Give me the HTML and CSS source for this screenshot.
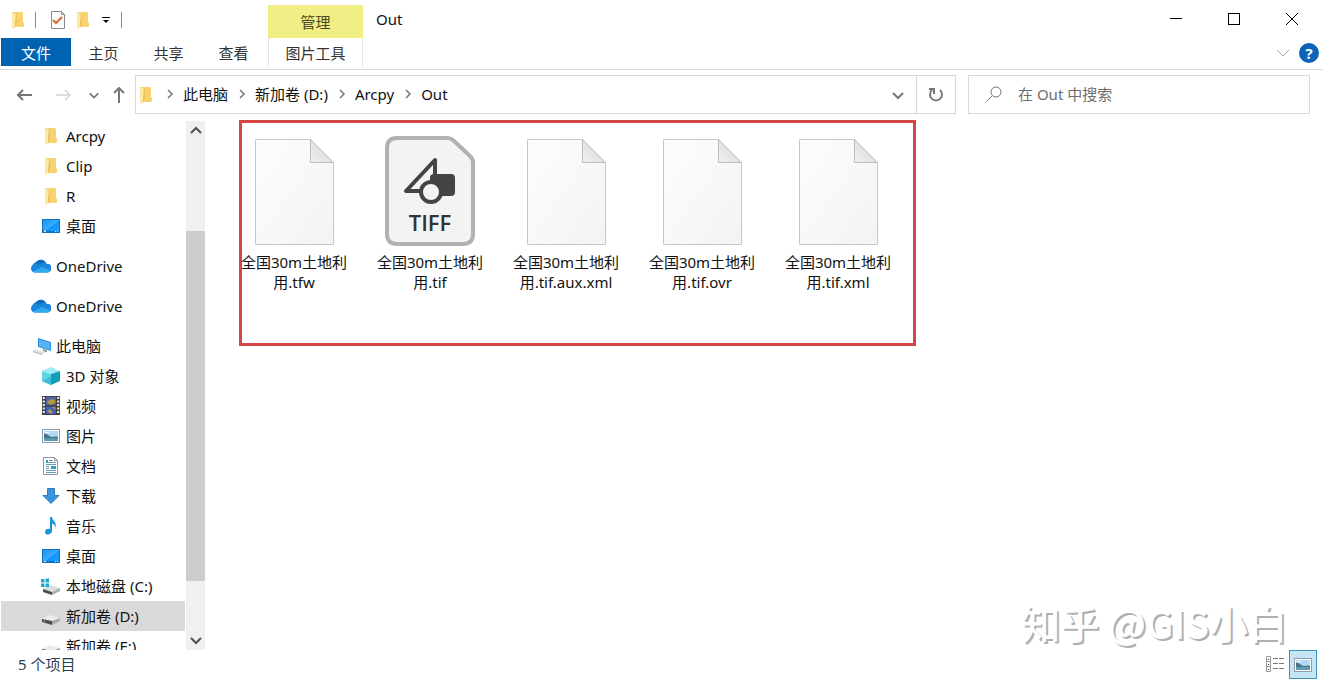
FILE: index.html
```html
<!DOCTYPE html>
<html lang="zh-CN">
<head>
<meta charset="UTF-8">
<title>Out</title>
<link rel="stylesheet" href="styles.css">
</head>
<body>

<!-- Shared icons -->
<svg class="sprite" aria-hidden="true">
	<defs>
		<linearGradient id="page-fill" x1="0" y1="0" x2="1" y2="1">
			<stop offset="0" stop-color="#fdfdfe"/>
			<stop offset="1" stop-color="#f1f3f5"/>
		</linearGradient>
		<linearGradient id="fold-fill" x1="0" y1="1" x2="1" y2="0">
			<stop offset="0" stop-color="#f4f1f2"/>
			<stop offset="0.6" stop-color="#dddbdc"/>
		</linearGradient>
		<linearGradient id="screen-fill" x1="0" y1="0" x2="1" y2="1">
			<stop offset="0" stop-color="#1492f5"/>
			<stop offset="0.5" stop-color="#3aaaff"/>
			<stop offset="0.55" stop-color="#0f95fb"/>
			<stop offset="1" stop-color="#1ba2ff"/>
		</linearGradient>
	</defs>
	<symbol id="i-folder" viewBox="0 0 20 20">
		<path d="M4 2h10l1 1v9l1 1v3l-1 1H5l-1-1z" fill="#f6d271"/>
		<path d="M4 2l4 2v9l-2 6-2-1z" fill="#ffe8a2"/>
		<path d="M8 4l1-1v9l-2 6v-5z" fill="#eac15c"/>
	</symbol>
	<symbol id="i-desktop" viewBox="0 0 20 20">
		<rect x="1.500" y="3.500" width="17" height="13" fill="url(#screen-fill)" stroke="#1070ba"/>
		<path d="M2 15.500h16" stroke="#0e76c8"/>
		<path d="M3 15.500h2m9 0h1m1 0h1" stroke="#d7efff"/>
	</symbol>
	<symbol id="i-cloud" viewBox="0 0 20 20">
		<path d="M4 15a5 5 0 0 1 1-9 6 6 0 0 1 10.500 2A4 4 0 0 1 17 16H4z" fill="#0f6cc4"/>
		<path d="M10 8a4 4 0 0 1 6 0 4 4 0 0 1 1 8H4z" fill="#1788dc"/>
		<path d="M0 13a5 5 0 0 1 7-5l12 6c-.5 2-1.500 2.500-3 2.500H4c-2 0-3.500-1-4-3.500z" fill="#1a86da"/>
		<path d="M11 11l8 3c-.5 2-1.500 2.500-3 2.500H4c-1 0-1.500-.5-2-1z" fill="#34a8ee"/>
	</symbol>
	<symbol id="i-pc" viewBox="0 0 20 20">
		<path d="M7 2l13 4v9L7 11z" fill="#2f91dc"/>
		<path d="M8 3.500l11 3.300v7L8 10.500z" fill="#54b3f4"/>
		<path d="M12 13l4 1.200v2l-4-1z" fill="#8c9298"/>
		<path d="M4 13l10 3-3 2-9-3z" fill="#e4e6e8"/>
		<path d="M2 15l9 3v.8L2 16zM11 18l3-2" fill="#b4b8bb" stroke="#b4b8bb" stroke-width=".4"/>
	</symbol>
	<symbol id="i-cube" viewBox="0 0 20 20">
		<path d="M10 1l9 4-9 3-9-3z" fill="#9cecf3"/>
		<path d="M1 5l9 3v11l-9-4z" fill="#5fd6e6"/>
		<path d="M19 5l-9 3v11l9-4z" fill="#149cb8"/>
		<path d="M1 15l9-5v9z" fill="#40bfd4"/>
	</symbol>
	<symbol id="i-video" viewBox="0 0 20 20">
		<path d="M1 0h18v19H1z" fill="#454040"/>
		<path d="M5 1h10v8H5z" fill="#4b67b1"/>
		<path d="M5 10.500h10V18H5z" fill="#3d62bd"/>
		<path d="M6 6l4-3 4 1v3l-5 2z" fill="#b79a3b"/>
		<path d="M6 15l3-2 3 3-2 2zM11 11h3v3z" fill="#b49a48"/>
		<path d="M2.800 1v17M17.200 1v17" stroke="#efefef" stroke-width="2" stroke-dasharray="2 1.500"/>
	</symbol>
	<symbol id="i-picture" viewBox="0 0 20 20">
		<rect x="1.500" y="3.500" width="17" height="13" fill="#fff" stroke="#8e9ba7"/>
		<path d="M3 5h14v10H3z" fill="#b0d8f7"/>
		<path d="M3 8c3-1 5 3 8 3 2 0 3-1 6 0v2H3z" fill="#4a7282"/>
		<path d="M3 12h14v3H3z" fill="#5b9ab4"/>
		<path d="M4 6.500h4" stroke="#fff"/>
	</symbol>
	<symbol id="i-document" viewBox="0 0 20 20">
		<path d="M2.500 1.500h11l3 3v14h-14z" fill="#fff" stroke="#8d979e"/>
		<path d="M13.500 1.500v3h3" fill="none" stroke="#8d979e"/>
		<path d="M8 4.500h4M7 6.500h8M5 8.500h10M5 10.500h3M5 12.500h3M5 14.500h10M5 16.500h10" stroke="#699cb4"/>
		<path d="M10 10h5v3h-5zM5 4h2v3H5z" fill="#2fa1ba"/>
	</symbol>
	<symbol id="i-download" viewBox="0 0 20 20">
		<path d="M6.500 2.500h7v7h4.500l-8 8-8-8h4.500z" fill="#3c92dc" stroke="#2a7bc4"/>
	</symbol>
	<symbol id="i-music" viewBox="0 0 20 20">
		<path d="M9 1h2c0 4 6 5 3 11 0-3-1-4-3-4.500V15c0 4-7 5-7 1 0-3 3-4 5-3z" fill="#1f92dc"/>
	</symbol>
	<symbol id="i-drive" viewBox="0 0 20 20">
		<path d="M1 13l8-4 10 3-8 3z" fill="#ececec"/>
		<path d="M1 13l10 2v4L1 16z" fill="#4b4e50"/>
		<path d="M11 15l8-3v3l-8 4z" fill="#a8abad"/>
		<path d="M3 15l1 .3" stroke="#e8f5e9"/>
	</symbol>
	<symbol id="i-system" viewBox="0 0 20 20">
		<path d="M2 13l7-4 10 3-8 4z" fill="#dedede"/>
		<path d="M2 13l9 3v3l-9-3z" fill="#4b4e50"/>
		<path d="M11 16l8-4v3l-8 4z" fill="#a8abad"/>
		<path d="M0 3h3.500v3.500H0zM4.500 2.500H8v4H4.500zM0 7.500h3.500V11H0zM4.500 7.500H8V11H4.500z" fill="#20a9c8"/>
	</symbol>
	<symbol id="i-chevron" viewBox="0 0 10 10">
		<path d="M3 1l4 4-4 4" fill="none" stroke="#757575" stroke-width="1.500"/>
	</symbol>
	<symbol id="i-down" viewBox="0 0 14 14">
		<path d="M2 5l5 5 5-5" fill="none" stroke="currentColor" stroke-width="2"/>
	</symbol>
	<symbol id="i-page" viewBox="0 0 80 108">
		<path d="M1.500 1.500h55l23 23v82h-78z" fill="url(#page-fill)" stroke="#c6c8ca"/>
		<path d="M56.500 1.500v23h23z" fill="url(#fold-fill)" stroke="#bdbdbd"/>
	</symbol>
</svg>

<div class="window">
	<header class="titlebar">
		<div class="quick">
			<svg class="icon"><use href="#i-folder"/></svg>
			<span class="divider"></span>
			<button class="tool" aria-label="属性">
				<svg class="icon" viewBox="0 0 20 20">
					<path d="M3.500 1.500h10l3 3v14h-13z" fill="#fbfbfb" stroke="#8a8a8a"/>
					<path d="M13.500 1.500v3h3" fill="none" stroke="#8a8a8a"/>
					<path d="M5 10l3 3 6-6" fill="none" stroke="#dd6836" stroke-width="2"/>
				</svg>
			</button>
			<button class="tool" aria-label="新建文件夹"><svg class="icon"><use href="#i-folder"/></svg></button>
			<button class="tool tool-menu" aria-label="自定义快速访问工具栏">
				<svg class="icon-small" viewBox="0 0 10 10"><path d="M1 2.500h8" stroke="#000"/><path d="M2 5h6L5 8z" fill="#000"/></svg>
			</button>
			<span class="divider"></span>
		</div>
		<div class="context-title">管理</div>
		<div class="title">Out</div>
		<div class="controls">
			<button aria-label="最小化"><svg viewBox="0 0 14 14"><path d="M1 6.500h12" stroke="#000"/></svg></button>
			<button aria-label="最大化"><svg viewBox="0 0 14 14"><rect x="1.500" y="1.500" width="11" height="11" fill="none" stroke="#000"/></svg></button>
			<button aria-label="关闭"><svg viewBox="0 0 14 14"><path d="M1 1l12 12M13 1L1 13" stroke="#000"/></svg></button>
		</div>
	</header>

	<nav class="tabs">
		<button class="tab tab-file">文件</button>
		<button class="tab">主页</button>
		<button class="tab">共享</button>
		<button class="tab">查看</button>
		<button class="tab tab-context">图片工具</button>
		<div class="help">
			<button class="expand" aria-label="展开功能区"><svg viewBox="0 0 14 14"><path d="M1 4l6 6 6-6" fill="none" stroke="#a5a5a5"/></svg></button>
			<button class="help-button" aria-label="帮助">?</button>
		</div>
	</nav>

	<div class="navbar">
		<div class="history">
			<button class="nav-back" aria-label="后退"><svg viewBox="0 0 16 16"><path d="M15 8H1M6 3L1 8l5 5" fill="none" stroke="#777" stroke-width="2"/></svg></button>
			<button class="nav-forward" aria-label="前进"><svg viewBox="0 0 16 16"><path d="M1 8h14M10 3l5 5-5 5" fill="none" stroke="#d4d4d4" stroke-width="1.500"/></svg></button>
			<button class="nav-recent" aria-label="最近浏览的位置"><svg viewBox="0 0 14 14"><use href="#i-down"/></svg></button>
			<button class="nav-up" aria-label="向上"><svg viewBox="0 0 16 16"><path d="M8 16V1M3 6l5-5 5 5" fill="none" stroke="#777" stroke-width="2"/></svg></button>
		</div>
		<div class="address">
			<svg class="icon"><use href="#i-folder"/></svg>
			<ol class="crumbs">
				<li><svg><use href="#i-chevron"/></svg><a href="#pc">此电脑</a></li>
				<li><svg><use href="#i-chevron"/></svg><a href="#d">新加卷 (D:)</a></li>
				<li><svg><use href="#i-chevron"/></svg><a href="#arcpy">Arcpy</a></li>
				<li><svg><use href="#i-chevron"/></svg><a href="#out">Out</a></li>
			</ol>
			<button class="address-list" aria-label="以前的位置"><svg viewBox="0 0 14 14"><use href="#i-down"/></svg></button>
			<button class="refresh" aria-label="刷新"><svg viewBox="0 0 16 16"><path d="M12 3a6 6 0 1 1-8 0" fill="none" stroke="#777" stroke-width="2"/><path d="M1 2h5v5" fill="none" stroke="#777" stroke-width="2"/></svg></button>
		</div>
		<label class="search">
			<svg viewBox="0 0 16 16"><circle cx="10" cy="6" r="5" fill="none" stroke="#777"/><path d="M6.500 9.500L.5 15.500" stroke="#777"/></svg>
			<input type="text" placeholder="在 Out 中搜索" aria-label="在 Out 中搜索">
		</label>
	</div>

	<div class="main">
		<nav class="tree">
			<ul>
				<li><a href="#arcpy"><svg class="icon"><use href="#i-folder"/></svg>Arcpy</a></li>
				<li><a href="#clip"><svg class="icon"><use href="#i-folder"/></svg>Clip</a></li>
				<li><a href="#r"><svg class="icon"><use href="#i-folder"/></svg>R</a></li>
				<li><a href="#desktop"><svg class="icon"><use href="#i-desktop"/></svg>桌面</a></li>
			</ul>
			<ul class="top-level">
				<li><a href="#onedrive"><svg class="icon"><use href="#i-cloud"/></svg>OneDrive</a></li>
			</ul>
			<ul class="top-level">
				<li><a href="#onedrive-2"><svg class="icon"><use href="#i-cloud"/></svg>OneDrive</a></li>
			</ul>
			<ul class="top-level">
				<li><a href="#pc"><svg class="icon"><use href="#i-pc"/></svg>此电脑</a></li>
			</ul>
			<ul>
				<li><a href="#3d"><svg class="icon"><use href="#i-cube"/></svg>3D 对象</a></li>
				<li><a href="#video"><svg class="icon"><use href="#i-video"/></svg>视频</a></li>
				<li><a href="#pictures"><svg class="icon"><use href="#i-picture"/></svg>图片</a></li>
				<li><a href="#documents"><svg class="icon"><use href="#i-document"/></svg>文档</a></li>
				<li><a href="#downloads"><svg class="icon"><use href="#i-download"/></svg>下载</a></li>
				<li><a href="#music"><svg class="icon"><use href="#i-music"/></svg>音乐</a></li>
				<li><a href="#desktop"><svg class="icon"><use href="#i-desktop"/></svg>桌面</a></li>
				<li><a href="#c"><svg class="icon"><use href="#i-system"/></svg>本地磁盘 (C:)</a></li>
				<li><a class="selected" href="#d"><svg class="icon"><use href="#i-drive"/></svg>新加卷 (D:)</a></li>
				<li><a href="#e"><svg class="icon"><use href="#i-drive"/></svg>新加卷 (E:)</a></li>
			</ul>
		</nav>
		<div class="scrollbar">
			<button class="scroll-up" aria-label="向上滚动"><svg viewBox="0 0 14 14"><use href="#i-down"/></svg></button>
			<div class="scroll-before"></div>
			<div class="scroll-thumb"></div>
			<div class="scroll-after"></div>
			<button aria-label="向下滚动"><svg viewBox="0 0 14 14"><use href="#i-down"/></svg></button>
		</div>

		<main class="files">
			<a class="file" href="#tfw"><svg class="page"><use href="#i-page"/></svg><span>全国30m土地利用.tfw</span></a>
			<a class="file" href="#tif">
				<svg class="tiff" viewBox="0 0 90 112">
					<path d="M12 3h51q3 0 6 3l15 14q4 4 4 7v72q0 10-10 10H12q-10 0-10-10V13Q2 3 12 3z" fill="#f3f3f3" stroke="#b1b1b1" stroke-width="4"/>
					<path d="M50 25v31H21z" fill="none" stroke="#444" stroke-width="4" stroke-linejoin="round"/>
					<rect x="45" y="39" width="25" height="22" rx="4" fill="#444"/>
					<circle cx="46" cy="57" r="10" fill="#f3f3f3" stroke="#444" stroke-width="4"/>
					<text x="45" y="96" text-anchor="middle">TIFF</text>
				</svg>
				<span>全国30m土地利用.tif</span>
			</a>
			<a class="file" href="#aux"><svg class="page"><use href="#i-page"/></svg><span>全国30m土地利用.tif.aux.xml</span></a>
			<a class="file" href="#ovr"><svg class="page"><use href="#i-page"/></svg><span>全国30m土地利用.tif.ovr</span></a>
			<a class="file" href="#xml"><svg class="page"><use href="#i-page"/></svg><span>全国30m土地利用.tif.xml</span></a>
			<div class="marker"></div>
			<div class="watermark">知乎 @GIS小白</div>
		</main>
	</div>

	<footer class="status">
		<span class="count">5 个项目</span>
		<button class="view" aria-label="详细信息">
			<svg class="icon" viewBox="0 0 20 20">
				<path d="M1.500 1.500h4v15h-4zM1.500 6.500h4M1.500 11.500h4" fill="none" stroke="#999"/>
				<path d="M3 4.500h1M3 9.500h1M3 14.500h1" stroke="#333"/>
				<path d="M8 3.500h5m1 0h5M8 8.500h5m1 0h5M8 13.500h5m1 0h5" stroke="#777"/>
			</svg>
		</button>
		<button class="view active" aria-label="大图标"><svg class="icon"><use href="#i-picture"/></svg></button>
	</footer>
</div>

</body>
</html>
```
FILE: styles.css
```css
* {
	box-sizing: border-box;
}
body {
	margin: 0;
	font: 15px/20px "Noto Sans", "Noto Sans CJK SC", sans-serif;
	color: #111;
	background: #fff;
}
button {
	display: flex;
	align-items: center;
	justify-content: center;
	margin: 0;
	padding: 0;
	border: 0;
	background: none;
	font: inherit;
	color: inherit;
}
a {
	color: inherit;
	text-decoration: none;
}
ul, ol {
	margin: 0;
	padding: 0;
	list-style: none;
}
svg {
	display: block;
	flex: none;
}
.sprite {
	position: absolute;
	width: 0;
	height: 0;
}
.icon {
	width: 20px;
	height: 20px;
}
.icon-small {
	width: 10px;
	height: 10px;
}

.window {
	display: flex;
	flex-direction: column;
	height: 100vh;
	overflow: hidden;
}

/* Title bar */
.titlebar {
	display: flex;
	flex: none;
	height: 38px;
}
.quick {
	display: flex;
	align-items: center;
	width: 268px;
	padding-left: 8px;
	padding-top: 2px;
}
.divider {
	width: 1px;
	height: 16px;
	margin: 0 7px;
	background: #8a8a8a;
}
.tool {
	width: 20px;
	height: 24px;
	margin-left: 5px;
}
.tool-menu {
	width: 16px;
}
.context-title {
	width: 95px;
	margin-top: 5px;
	line-height: 34px;
	height: 33px;
	text-align: center;
	color: #4a4a20;
	background: #f0ee84;
}
.title {
	flex: 1;
	padding-left: 13px;
	line-height: 38px;
}
.controls {
	display: flex;
	padding-right: 2px;
}
.controls button {
	width: 58px;
}
.controls svg {
	width: 14px;
	height: 14px;
}

/* Ribbon tabs */
.tabs {
	display: flex;
	flex: none;
	height: 32px;
	padding-left: 1px;
	border-bottom: 1px solid #dadbdc;
}
.tab {
	width: 65px;
	height: 28px;
	padding-top: 1px;
	color: #333;
}
.tab-file {
	width: 70px;
	color: #fff;
	background: #0063b1;
}
.tab-context {
	width: 95px;
	margin-left: 2px;
	border: solid #e2e2e2;
	border-width: 0 1px;
}
.help {
	display: flex;
	align-items: center;
	gap: 9px;
	margin-left: auto;
	padding: 0 4px 1px 0;
}
.expand svg {
	width: 14px;
	height: 14px;
}
.help-button {
	width: 20px;
	height: 20px;
	border-radius: 50%;
	color: #fff;
	font-weight: bold;
	background: #0c64b8;
}

/* Address row */
.navbar {
	display: flex;
	flex: none;
	height: 50px;
	padding: 5px 13px 6px 0;
}
.history {
	display: flex;
	align-items: center;
	width: 135px;
	padding-left: 9px;
	color: #777;
}
.history svg {
	width: 16px;
	height: 16px;
}
.nav-back {
	width: 32px;
}
.nav-forward {
	width: 44px;
}
.nav-recent {
	width: 18px;
}
.nav-up {
	width: 32px;
}
.history .nav-recent svg {
	width: 12px;
	height: 12px;
}
.address {
	display: flex;
	align-items: center;
	flex: 1;
	border: 1px solid #d9d9d9;
}
.crumbs {
	display: flex;
	flex: 1;
	padding-bottom: 2px;
}
.crumbs li {
	display: flex;
	align-items: center;
	gap: 8px;
	padding-left: 9px;
}
.crumbs svg {
	width: 10px;
	height: 10px;
}
.address-list {
	width: 36px;
	color: #777;
}
.address-list svg {
	width: 14px;
	height: 14px;
}
.refresh {
	align-self: stretch;
	width: 39px;
	border-left: 1px solid #d9d9d9;
}
.refresh svg {
	width: 16px;
	height: 16px;
}
.search {
	display: flex;
	align-items: center;
	width: 342px;
	margin-left: 12px;
	padding: 0 0 2px 17px;
	border: 1px solid #d9d9d9;
}
.search svg {
	width: 16px;
	height: 16px;
}
.search input {
	flex: 1;
	min-width: 0;
	margin-left: 16px;
	padding: 0;
	border: 0;
	outline: 0;
	font: inherit;
}
.search input::placeholder {
	color: #6d6d6d;
	opacity: 1;
}

/* Folder tree */
.main {
	display: flex;
	flex: 1;
	min-height: 0;
}
.tree {
	width: 185px;
	padding: 1px 0 0 1px;
	overflow: hidden;
}
.tree a {
	display: flex;
	align-items: center;
	gap: 5px;
	height: 30px;
	padding-left: 40px;
	white-space: nowrap;
}
.tree .selected {
	background: #d9d9d9;
}
.top-level {
	padding-top: 10px;
}
.tree .top-level a {
	padding-left: 30px;
}
.scrollbar {
	display: flex;
	flex-direction: column;
	width: 19px;
	margin: 1px 0 0 1px;
	color: #505050;
	background: #f0f0f0;
}
.scrollbar button {
	height: 20px;
}
.scrollbar svg {
	width: 14px;
	height: 14px;
}
.scroll-up svg {
	transform: rotate(180deg);
}
.scroll-before {
	flex: 90;
}
.scroll-thumb {
	flex: 350;
	background: #cdcdcd;
}
.scroll-after {
	flex: 49;
}

/* File list */
.files {
	position: relative;
	display: flex;
	flex: 1;
	flex-wrap: wrap;
	align-content: flex-start;
	padding: 15px 21px;
}
.file {
	display: flex;
	flex-direction: column;
	align-items: center;
	width: 136px;
}
.file span {
	width: 114px;
	margin-top: 5px;
	text-align: center;
}
.page {
	width: 80px;
	height: 108px;
	margin: 3px 0 1px;
}
.tiff {
	width: 90px;
	height: 112px;
}
.tiff text {
	font: 600 22px "Open Sans", sans-serif;
	fill: #333;
}
.marker {
	position: absolute;
	top: 0;
	left: 34px;
	width: 677px;
	height: 226px;
	border: 3px solid #d64545;
	pointer-events: none;
}
.watermark {
	position: absolute;
	right: 36px;
	bottom: 8px;
	font: 500 39px/40px "Noto Sans CJK SC", sans-serif;
	color: #fff;
	text-shadow: 2px 2px #b0b0b0;
}

/* Status bar */
.status {
	display: flex;
	align-items: center;
	flex: none;
	height: 30px;
	padding: 0 6px 1px 18px;
	color: #2b3f55;
}
.count {
	flex: 1;
	padding-bottom: 2px;
}
.view {
	width: 28px;
	height: 29px;
}
.active {
	border: 1px solid #3c93ba;
	background: #c4e5f6;
}
```
